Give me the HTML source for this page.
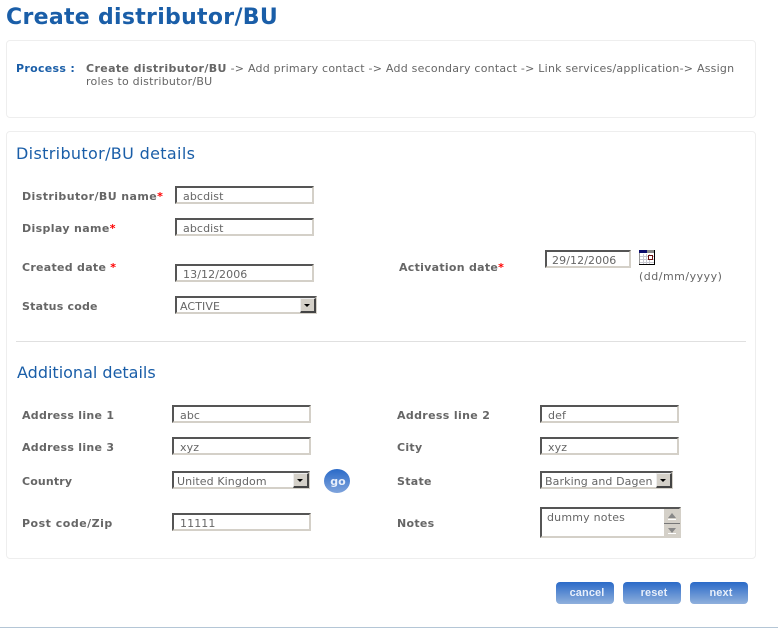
<!DOCTYPE html>
<html><head><meta charset="utf-8"><title>Create distributor/BU</title>
<style>
html,body{margin:0;padding:0;background:#fff}
body{width:778px;height:628px;position:relative;overflow:hidden;font-family:"DejaVu Sans",Verdana,sans-serif;font-size:11px;color:#666}
.t{position:absolute;white-space:nowrap;line-height:14px}
.l{font-weight:bold;color:#666;letter-spacing:.28px}
.h{color:#1a5ea8;font-size:16px;line-height:20px}
.r{color:#f00}
.box{position:absolute;box-sizing:border-box;border:1px solid #eeeeee;border-radius:4px}
.i{position:absolute;box-sizing:border-box;height:18px;border:2px solid;border-color:#555 #d4d0c8 #d4d0c8 #555;line-height:18px;padding-left:6px;color:#666;background:#fff;white-space:nowrap;font-size:11px;letter-spacing:.1px}
.s{padding-left:3px}
.a{position:absolute;top:0;right:-1px;width:16px;height:15px;box-sizing:border-box;background:#d4d0c8;border-style:solid;border-width:1px 2px 2px 1px;border-color:#eee #444 #444 #eee}
.a:after{content:"";position:absolute;left:3px;top:5px;border:3px solid transparent;border-top:3px solid #000;border-bottom:0}
.b{position:absolute;top:582px;width:58px;height:22px;border-radius:4px;background:linear-gradient(#2a6ac8,#8fb0dc);color:#e8effa;font-family:"Liberation Sans",Arial,sans-serif;font-weight:bold;text-align:center;line-height:23px;font-size:11px;letter-spacing:.1px;padding-left:4px;box-sizing:border-box}
</style></head><body>
<div class="t" style="left:6px;top:4px;font-size:22px;line-height:27px;font-weight:bold;color:#1a5ea8;letter-spacing:.3px">Create distributor/BU</div>

<div class="box" style="left:6px;top:40px;width:750px;height:78px"></div>
<div class="t" style="left:16px;top:62px;font-weight:bold;color:#1a5ea8;letter-spacing:.3px">Process :</div>
<div class="t" style="left:86px;top:62px;letter-spacing:.23px"><b style="letter-spacing:.38px">Create distributor/BU</b> -&gt; Add primary contact -&gt; Add secondary contact -&gt; Link services/application-&gt; Assign</div>
<div class="t" style="left:86px;top:75px;letter-spacing:.23px">roles to distributor/BU</div>

<div class="box" style="left:6px;top:131px;width:750px;height:428px"></div>
<div class="t h" style="left:16px;top:144px;letter-spacing:.34px">Distributor/BU details</div>

<div class="t l" style="left:22px;top:190px;letter-spacing:.42px">Distributor/BU name<span class="r">*</span></div>
<div class="i" style="left:175px;top:186px;width:139px">abcdist</div>
<div class="t l" style="left:22px;top:222px;letter-spacing:.36px">Display name<span class="r">*</span></div>
<div class="i" style="left:175px;top:218px;width:139px">abcdist</div>
<div class="t l" style="left:22px;top:261px">Created date <span class="r">*</span></div>
<div class="i" style="left:175px;top:264px;width:139px">13/12/2006</div>
<div class="t l" style="left:22px;top:300px;letter-spacing:.2px">Status code</div>
<div class="i s" style="left:175px;top:296px;width:142px">ACTIVE<span class="a"></span></div>

<div class="t l" style="left:399px;top:261px">Activation date<span class="r">*</span></div>
<div class="i" style="left:545px;top:250px;width:86px;padding-left:5px">29/12/2006</div>
<svg style="position:absolute;left:639px;top:250px" width="16" height="15" viewBox="0 0 16 15">
<rect x=".5" y=".5" width="15" height="14" fill="#fff" stroke="#bbb"/>
<path d="M1 6.500H15M1 9.500H15M1 12.500H15M4.500 4V14M7.500 4V14M10.500 4V14" stroke="#c8c8d0" fill="none"/>
<rect x="0" y="0" width="8" height="3" fill="#0a0a6a"/><rect x="8" y="0" width="8" height="3" fill="#888"/>
<path d="M15.500 0V14.500H0" stroke="#000" fill="none"/><path d="M.5 3V14" stroke="#999" fill="none"/>
<rect x="9.500" y="5.500" width="4" height="4" fill="#fff" stroke="#6a1010"/>
</svg>
<div class="t" style="left:639px;top:270px;letter-spacing:.5px">(dd/mm/yyyy)</div>

<div style="position:absolute;left:16px;top:341px;width:730px;height:1px;background:#e0e0e0"></div>
<div class="t h" style="left:17px;top:363px">Additional details</div>

<div class="t l" style="left:22px;top:409px">Address line 1</div>
<div class="i" style="left:172px;top:405px;width:139px">abc</div>
<div class="t l" style="left:22px;top:441px">Address line 3</div>
<div class="i" style="left:172px;top:437px;width:139px">xyz</div>
<div class="t l" style="left:22px;top:475px;letter-spacing:.15px">Country</div>
<div class="i s" style="left:172px;top:471px;width:138px">United Kingdom<span class="a"></span></div>
<div style="position:absolute;left:324px;top:469px;width:26px;height:24px;border-radius:50%;background:linear-gradient(#2a6ac8,#7fa4dc);color:#e8effa;font-weight:bold;text-align:center;line-height:26px;font-size:11px;padding-left:2px;box-sizing:border-box">go</div>
<div class="t l" style="left:22px;top:517px;letter-spacing:.5px">Post code/Zip</div>
<div class="i" style="left:172px;top:513px;width:139px">11111</div>

<div class="t l" style="left:397px;top:409px;letter-spacing:.35px">Address line 2</div>
<div class="i" style="left:540px;top:405px;width:139px">def</div>
<div class="t l" style="left:397px;top:441px">City</div>
<div class="i" style="left:540px;top:437px;width:139px">xyz</div>
<div class="t l" style="left:397px;top:475px">State</div>
<div class="i s" style="left:540px;top:471px;width:133px">Barking and Dagen<span class="a"></span></div>
<div class="t l" style="left:397px;top:517px">Notes</div>
<div class="i" style="left:540px;top:507px;width:141px;height:31px;line-height:14px;padding-top:2px;padding-left:5px;letter-spacing:.2px">dummy notes</div>
<svg style="position:absolute;left:664px;top:509px" width="16" height="28" viewBox="0 0 16 28">
<rect x="0" y="0" width="16" height="14" fill="#d4d0c8"/><rect x="0" y="15" width="16" height="13" fill="#d4d0c8"/>
<rect x="0" y="14" width="16" height="1" fill="#777"/>
<path d="M8 4L4 9H12Z" fill="#888"/><path d="M8 24L4 19H12Z" fill="#888"/>
<path d="M4 10.500H12M4 24.500H12" stroke="#fff" fill="none"/>
</svg>

<div class="b" style="left:556px">cancel</div>
<div class="b" style="left:623px">reset</div>
<div class="b" style="left:690px">next</div>

<div style="position:absolute;left:0;top:627px;width:778px;height:1px;background:#b4c6d6"></div>
</body></html>
